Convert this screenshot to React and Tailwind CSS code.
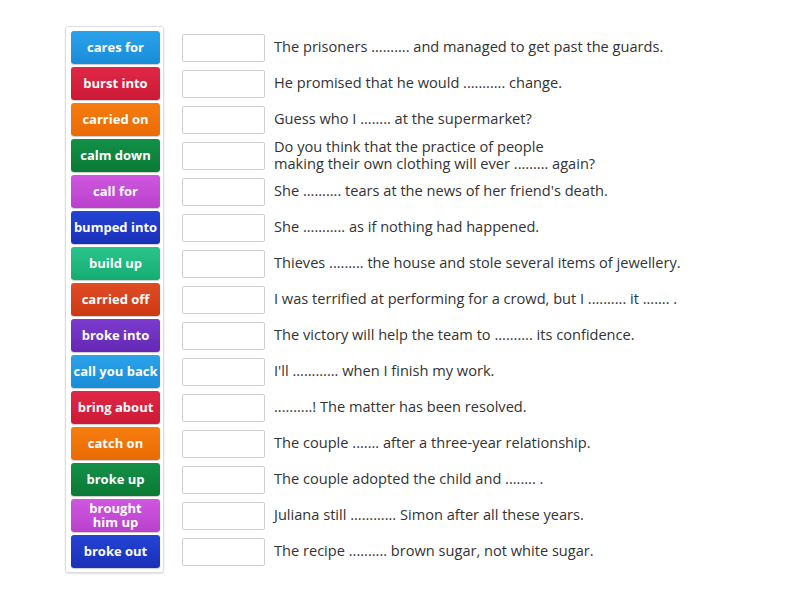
import React from "react";

const BLUE = "bg-linear-to-b from-[#2aa3ea] to-[#1a8cd9]";
const RED = "bg-linear-to-b from-[#e02646] to-[#cc1a36]";
const ORANGE = "bg-linear-to-b from-[#f67e10] to-[#ea6a04]";
const GREEN = "bg-linear-to-b from-[#139047] to-[#0b7a36]";
const MAGENTA = "bg-linear-to-b from-[#cf58e0] to-[#ba40cc]";
const NAVY = "bg-linear-to-b from-[#2443d4] to-[#1a30b8]";
const TEAL = "bg-linear-to-b from-[#2ac48c] to-[#16ad73]";
const RORANGE = "bg-linear-to-b from-[#e04c24] to-[#cc3812]";
const PURPLE = "bg-linear-to-b from-[#7c3ccf] to-[#6428b4]";

const buttons = [
  { t: "cares for", c: BLUE },
  { t: "burst into", c: RED },
  { t: "carried on", c: ORANGE },
  { t: "calm down", c: GREEN },
  { t: "call for", c: MAGENTA },
  { t: "bumped into", c: NAVY },
  { t: "build up", c: TEAL },
  { t: "carried off", c: RORANGE },
  { t: "broke into", c: PURPLE },
  { t: "call you back", c: BLUE },
  { t: "bring about", c: RED },
  { t: "catch on", c: ORANGE },
  { t: "broke up", c: GREEN },
  { t: "brought him up", c: MAGENTA, two: true },
  { t: "broke out", c: NAVY },
];

const sentences = [
  ["The prisoners .......... and managed to get past the guards."],
  ["He promised that he would ........... change."],
  ["Guess who I ........ at the supermarket?"],
  ["Do you think that the practice of people", "making their own clothing will ever ......... again?"],
  ["She .......... tears at the news of her friend's death."],
  ["She ........... as if nothing had happened."],
  ["Thieves ......... the house and stole several items of jewellery."],
  ["I was terrified at performing for a crowd, but I .......... it ....... ."],
  ["The victory will help the team to .......... its confidence."],
  ["I'll ............ when I finish my work."],
  ["..........! The matter has been resolved."],
  ["The couple ....... after a three-year relationship."],
  ["The couple adopted the child and ........ ."],
  ["Juliana still ............ Simon after all these years."],
  ["The recipe .......... brown sugar, not white sugar."],
];

export default function App() {
  return (
    <div
      className="w-[800px] h-[600px] bg-white flex items-start pl-[65px] pt-[26px]"
      style={{ fontFamily: '"Open Sans", "Noto Sans", sans-serif' }}
    >
      <div className="border border-[#dcdcdc] rounded-[3px] pl-[5px] pr-[3px] pt-[4px] pb-[4px] flex flex-col gap-[3px] shadow-[0_1px_2px_rgba(0,0,0,0.12)]">
        {buttons.map((b, i) => (
          <div
            key={i}
            className={`${b.c} w-[89px] h-[33px] pb-[2px] rounded-[3px] flex items-center justify-center text-white font-bold text-[13px] text-center shadow-[0_1px_1px_rgba(0,0,0,0.2)] ${b.two ? "leading-[14px] px-[18px]" : "leading-[16px]"}`}
          >
            {b.t}
          </div>
        ))}
      </div>
      <div className="ml-[18px] pt-[5px] flex flex-col gap-[3px]">
        {sentences.map((s, i) => (
          <div key={i} className="h-[33px] flex items-center">
            <div className="w-[83px] h-[28px] border border-[#cfcfcf] rounded-[2px] bg-white shrink-0" />
            <div className="ml-[9px] text-[14.6px] leading-[17px] text-[#333333] -translate-y-[1px]">
              {s.map((l, j) => (
                <div key={j}>{l}</div>
              ))}
            </div>
          </div>
        ))}
      </div>
    </div>
  );
}
